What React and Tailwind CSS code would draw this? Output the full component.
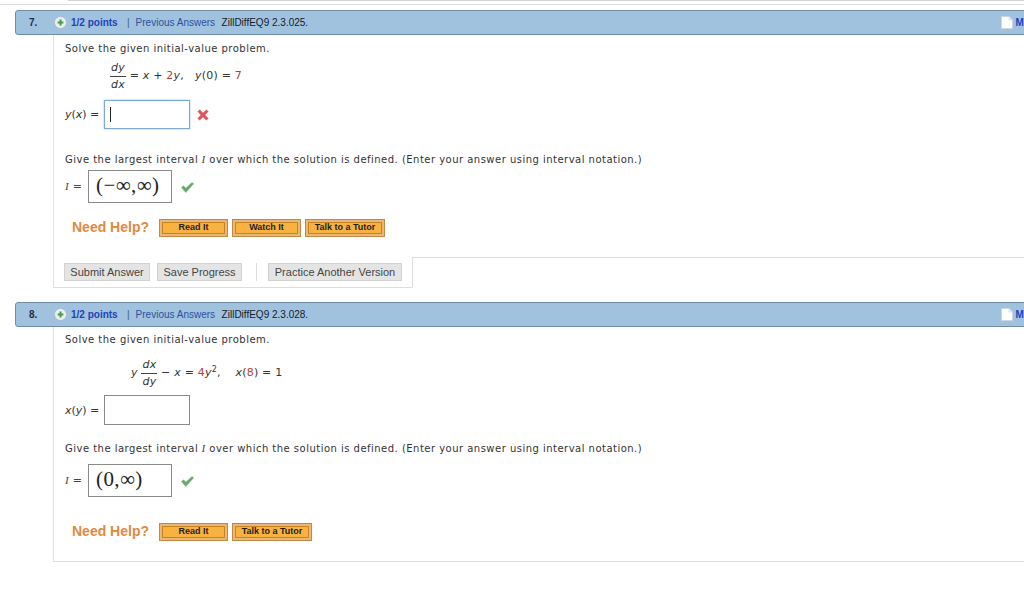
import React from "react";

const sans = "font-['Liberation_Sans',Arial,sans-serif]";
const dejavu = "font-['DejaVu_Sans',Verdana,sans-serif]";
const serif = "font-['Liberation_Serif',serif]";

function Plus() {
  return (
    <svg width="13" height="13" viewBox="0 0 13 13" className="shrink-0">
      <circle cx="6.5" cy="6.5" r="6" fill="#e9eef2" stroke="#a9b9c6" strokeWidth="0.8" />
      <path d="M6.5 3.6v5.8M3.6 6.5h5.8" stroke="#4f9a45" strokeWidth="2" />
    </svg>
  );
}

function Cross() {
  return (
    <svg width="12" height="12" viewBox="0 0 12 12">
      <path d="M0.8 2.6 2.6 0.8 6 3.9 9.4 0.8 11.2 2.6 8 6 11.2 9.4 9.4 11.2 6 8.1 2.6 11.2 0.8 9.4 4 6Z" fill="#e0555c" stroke="#d8454d" strokeWidth="0.4" />
    </svg>
  );
}

function Check() {
  return (
    <svg width="13" height="11" viewBox="0 0 13 11">
      <path d="M0.4 5.6 2.6 3.8 4.8 6.2 11 0.4 12.7 1.8 4.8 10.6Z" fill="#66a867" stroke="#7fb97c" strokeWidth="0.5" />
    </svg>
  );
}

function Doc() {
  return (
    <svg width="12" height="13" viewBox="0 0 12 13" className="shrink-0">
      <path d="M0.5 0.5H8L11.5 4V12.5H0.5Z" fill="#ffffff" stroke="#c9d4dd" strokeWidth="0.8" />
      <path d="M8 0.5V4H11.5" fill="#e8ecef" stroke="#c9d4dd" strokeWidth="0.6" />
    </svg>
  );
}

function Header({ num, code, className }) {
  return (
    <div className={`flex items-center h-[25px] w-[1020px] ml-[15px] bg-[#a0c2de] border border-[#6e8ea8] rounded-l-[3px] ${sans} ${className}`}>
      <span className="w-[38px] pl-[13px] text-[10px] font-bold text-[#1f2f3f]">{num}</span>
      <Plus />
      <span className="ml-[4px] text-[10px] font-bold text-[#2243b8] w-[50px] whitespace-nowrap">1/2 points</span>
      <span className="ml-[6px] text-[10px] text-[#3f5f80]">|</span>
      <span className="ml-[6px] text-[10px] text-[#2d4f9e] whitespace-nowrap w-[81px]">Previous Answers</span>
      <span className="ml-[5px] w-[87px] text-[10px] text-[#14202c] whitespace-nowrap">{code}</span>
      <div className="flex items-center ml-[692px] gap-[3px]">
        <Doc />
        <span className="text-[10px] font-bold text-[#2243b8]">M</span>
      </div>
    </div>
  );
}

function OrangeButton({ children, w }) {
  return (
    <div className={`h-[18px] ${w} bg-[#e9b878] border border-[#c28a45] p-[2px] shrink-0`}>
      <div className={`h-full flex items-center justify-center bg-[#f7b23f] border border-[#c9821f] text-[9px] font-bold text-[#1f1f1f] whitespace-nowrap ${sans}`}>
        {children}
      </div>
    </div>
  );
}

function GreyButton({ children, w }) {
  return (
    <div className={`h-[18px] ${w} flex items-center justify-center bg-[#e4e4e4] border border-[#d2d2d2] text-[11px] text-[#444444] whitespace-nowrap shrink-0 ${sans}`}>
      {children}
    </div>
  );
}

function AnswerBox({ children, w = "w-[86px]", h, blue }) {
  return (
    <div className={`${w} ${h} shrink-0 bg-white border ${blue ? "border-[#7fa9cf] shadow-[0_0_2px_#9cc0e0]" : "border-[#8a8a8a]"} flex items-center`}>
      {children}
    </div>
  );
}

const Lead = ({ children, className = "" }) => (
  <div className={`text-[10px] tracking-[0.48px] text-[#333333] leading-[14px] whitespace-nowrap ${dejavu} ${className}`}>{children}</div>
);

const V = ({ children }) => <i className="italic">{children}</i>;
const Red = ({ children }) => <span className="text-[#bb3b3b]">{children}</span>;

function Frac({ top, bottom }) {
  return (
    <span className="inline-flex flex-col items-center w-[16px] text-[11px] leading-[12px] italic">
      <span className="border-b border-[#444444] w-full text-center pb-[2px]">{top}</span>
      <span className="pt-[2px]">{bottom}</span>
    </span>
  );
}

const MathLine = ({ children, className = "" }) => (
  <div className={`flex items-center text-[11px] tracking-[0.2px] text-[#333333] whitespace-pre ${dejavu} ${className}`}>{children}</div>
);

const Interval = ({ children }) => (
  <span className={`text-[21px] leading-none pl-[7px] mb-[2px] text-[#222222] tracking-[0.4px] whitespace-nowrap ${serif}`}>{children}</span>
);

function IntervalLabel() {
  return (
    <span className={`w-[23px] shrink-0 text-[11px] tracking-[0.6px] text-[#444444] ${serif}`}>
      <i>I</i> <span className={dejavu}>=</span>
    </span>
  );
}

export default function App() {
  return (
    <div className="w-[1024px] h-[590px] bg-white overflow-hidden">
      <div className="h-[5px]">
        <div className="ml-[68px] h-[1px] bg-[#d4d4d4]" />
        <div className="mt-[3px] h-[1px] bg-[#dedede]" />
      </div>
      <Header num="7." code="ZillDiffEQ9 2.3.025." className="mt-[5px]" />

      <div className="ml-[53px] border-l border-[#e4e4e4]">
        <div className="h-[222px] pl-[11px] pt-[7px]">
          <Lead>Solve the given initial-value problem.</Lead>
          <MathLine className="ml-[45px] mt-[6px] h-[29px]">
            <Frac top="dy" bottom="dx" />
            <span> = <V>x</V> + <Red>2</Red><V>y</V>,   <V>y</V>(0) = <Red>7</Red></span>
          </MathLine>
          <div className="flex items-center mt-[9px] h-[29px]">
            <span className={`w-[39px] mt-[2px] text-[11px] text-[#333333] ${dejavu}`}><V>y</V>(<V>x</V>) =</span>
            <AnswerBox h="h-[29px]" blue>
              <div className="ml-[5px] w-px h-[15px] bg-[#222222]" />
            </AnswerBox>
            <span className="ml-[7px] mt-[1px] flex"><Cross /></span>
          </div>
          <Lead className="mt-[24px]">Give the largest interval <span className={`italic ${serif}`}>I</span> over which the solution is defined. (Enter your answer using interval notation.)</Lead>
          <div className="flex items-center mt-[3px] h-[33px]">
            <IntervalLabel />
            <AnswerBox h="h-[33px]" w="w-[84px]"><Interval>(−∞,∞)</Interval></AnswerBox>
            <span className="ml-[9px] mt-[2px] flex"><Check /></span>
          </div>
          <div className="flex items-center mt-[14px] gap-[4px] ml-[7px]">
            <span className={`w-[83px] text-[14px] font-bold text-[#e08a3f] whitespace-nowrap ${sans}`}>Need Help?</span>
            <OrangeButton w="w-[69px]">Read It</OrangeButton>
            <OrangeButton w="w-[69px]">Watch It</OrangeButton>
            <OrangeButton w="w-[80px]">Talk to a Tutor</OrangeButton>
          </div>
        </div>
        <div className="flex h-[31px]">
          <div className="w-[359px] border-b border-r border-[#dddddd] rounded-br-[2px] pl-[10px] pt-[6px] flex items-start gap-[7px]">
            <GreyButton w="w-[86px]">Submit Answer</GreyButton>
            <GreyButton w="w-[85px]">Save Progress</GreyButton>
            <div className="w-px h-[18px] bg-[#dddddd] ml-[7px]" />
            <GreyButton w="w-[134px] ml-[4px]">Practice Another Version</GreyButton>
          </div>
          <div className="flex-1 border-t border-[#dddddd]" />
        </div>
      </div>

      <Header num="8." code="ZillDiffEQ9 2.3.028." className="mt-[14px]" />

      <div className="ml-[53px] h-[235px] border-l border-b border-[#e0e0e0] pl-[11px] pt-[6px]">
        <Lead>Solve the given initial-value problem.</Lead>
        <MathLine className="ml-[66px] mt-[12px] h-[29px]">
          <V>y </V>
          <Frac top="dx" bottom="dy" />
          <span> − <V>x</V> = <Red>4</Red><V>y</V><sup className="text-[8px]">2</sup>,    <V>x</V>(<Red>8</Red>) = 1</span>
        </MathLine>
        <div className="flex items-center mt-[7px] h-[30px]">
          <span className={`w-[39px] mt-[2px] text-[11px] text-[#333333] ${dejavu}`}><V>x</V>(<V>y</V>) =</span>
          <AnswerBox h="h-[30px]" />
        </div>
        <Lead className="mt-[17px]">Give the largest interval <span className={`italic ${serif}`}>I</span> over which the solution is defined. (Enter your answer using interval notation.)</Lead>
        <div className="flex items-center mt-[8px] h-[33px]">
          <IntervalLabel />
          <AnswerBox h="h-[33px]" w="w-[84px]"><Interval>(0,∞)</Interval></AnswerBox>
          <span className="ml-[9px] mt-[2px] flex"><Check /></span>
        </div>
        <div className="flex items-center mt-[24px] gap-[4px] ml-[7px]">
          <span className={`w-[83px] text-[14px] font-bold text-[#e08a3f] whitespace-nowrap ${sans}`}>Need Help?</span>
          <OrangeButton w="w-[69px]">Read It</OrangeButton>
          <OrangeButton w="w-[80px]">Talk to a Tutor</OrangeButton>
        </div>
      </div>
    </div>
  );
}
